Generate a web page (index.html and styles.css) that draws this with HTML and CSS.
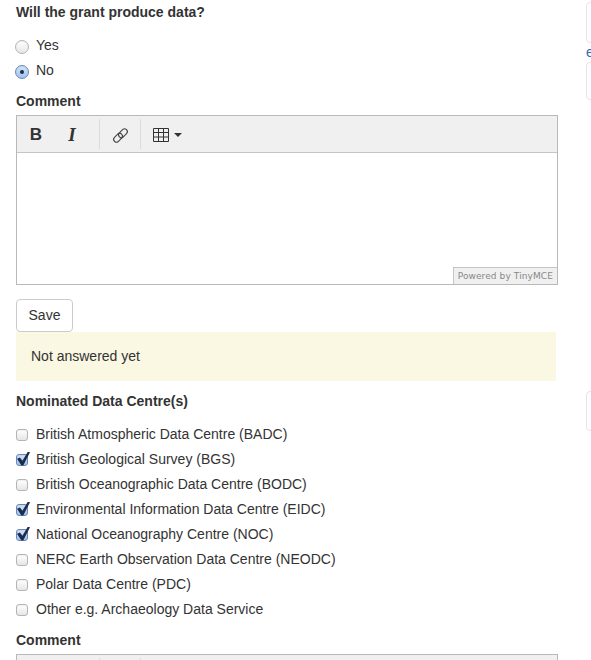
FILE: index.html
```html
<!DOCTYPE html>
<html lang="en">

<head>
    <meta charset="UTF-8">
    <title>Data questions</title>
    <link rel="stylesheet" href="styles.css">
</head>

<body>
    <main class="form">
        <h4 class="question">Will the grant produce data?</h4>
        <div class="radios">
            <label class="option"><input type="radio" name="data"> Yes</label>
            <label class="option"><input type="radio" name="data" checked> No</label>
        </div>

        <h5 class="field-label">Comment</h5>
        <div class="editor">
            <div class="toolbar">
                <div class="tool-group group-format">
                    <span class="tool tool-bold">B</span>
                    <span class="tool tool-italic">I</span>
                </div>
                <div class="tool-group group-link">
                    <span class="tool">
                        <svg width="19" height="19" viewBox="0 0 17 17" fill="none" stroke="#444" stroke-width="1">
                            <rect x="1.8" y="8" width="9" height="5" rx="2.5" transform="rotate(-45 6.3 10.5)" />
                            <rect x="6.2" y="4" width="9" height="5" rx="2.5" transform="rotate(-45 10.7 6.5)" />
                        </svg>
                    </span>
                </div>
                <div class="tool-group group-table">
                    <span class="tool tool-table">
                        <svg width="16" height="14" viewBox="0 0 16 14" fill="none" stroke="#333" stroke-width="1">
                            <path d="M0.5 0.5 H15.5 V13.5 H0.5 Z M0.5 4.5 H15.5 M0.5 9 H15.5 M5.5 0.5 V13.5 M10.5 0.5 V13.5" />
                        </svg>
                        <span class="caret"></span>
                    </span>
                </div>
            </div>
            <div class="edit-area">
                <span class="powered">Powered by TinyMCE</span>
            </div>
        </div>

        <button class="btn" type="button">Save</button>
        <div class="alert">Not answered yet</div>

        <h5 class="centres-label">Nominated Data Centre(s)</h5>
        <div class="checks">
            <label class="option"><input type="checkbox"> British Atmospheric Data Centre (BADC)</label>
            <label class="option"><input type="checkbox" checked> British Geological Survey (BGS)</label>
            <label class="option"><input type="checkbox"> British Oceanographic Data Centre (BODC)</label>
            <label class="option"><input type="checkbox" checked> Environmental Information Data Centre (EIDC)</label>
            <label class="option"><input type="checkbox" checked> National Oceanography Centre (NOC)</label>
            <label class="option"><input type="checkbox"> NERC Earth Observation Data Centre (NEODC)</label>
            <label class="option"><input type="checkbox"> Polar Data Centre (PDC)</label>
            <label class="option"><input type="checkbox"> Other e.g. Archaeology Data Service</label>
        </div>

        <h5 class="field-label second">Comment</h5>
        <div class="editor">
            <div class="toolbar">
                <div class="tool-group group-format"><span class="tool-blank"></span></div>
                <div class="tool-group group-link"><span class="tool-blank"></span></div>
            </div>
        </div>
    </main>

    <aside class="side">
        <div class="side-card first"></div>
        <span class="side-link">e</span>
        <div class="side-card second"></div>
        <div class="side-card third"></div>
    </aside>
</body>

</html>
```

FILE: styles.css
```css
html,
body {
    height: 100%;
    overflow: hidden;
}

body {
    display: flex;
    margin: 0;
    background: #fff;
    color: #333;
    font-family: "Liberation Sans", Arial, sans-serif;
    font-size: 14px;
    line-height: 20px;
}

.form {
    flex: none;
    width: 540px;
    margin-left: 16px;
    padding-top: 2px;
}

.question,
.field-label,
.centres-label {
    margin: 0;
    font-size: 14px;
    font-weight: bold;
    line-height: 20px;
}

.radios {
    margin-top: 10px;
}

.option {
    display: flex;
    align-items: center;
    height: 25px;
    white-space: nowrap;
}

.option input {
    position: relative;
    flex: none;
    appearance: none;
    border: 1px solid #b5b5b5;
    background: linear-gradient(#fff, #e6e6e6);
    box-shadow: inset 0 1px 1px rgba(0, 0, 0, 0.06);
}

.option input[type="radio"] {
    width: 14px;
    height: 14px;
    margin: 4px 7px 0 -1px;
    border-radius: 50%;
}

.option input[type="checkbox"] {
    width: 12px;
    height: 12px;
    margin: 2px 8px 0 0;
    border-radius: 3px;
}

.option input:checked {
    border-color: #6a87b8;
    background: linear-gradient(#d3e4f8, #9cc3ee);
}

.option input[type="radio"]:checked::after {
    content: "";
    position: absolute;
    top: 4px;
    left: 4px;
    width: 4px;
    height: 4px;
    border-radius: 50%;
    background: #1c2b45;
}

.option input[type="checkbox"]:checked::after {
    content: "";
    position: absolute;
    top: -3px;
    left: 0;
    width: 13px;
    height: 14px;
    background: #1d2c4a;
    clip-path: polygon(0 52%, 22% 42%, 42% 66%, 84% 0, 100% 6%, 48% 100%, 34% 100%);
}

.field-label {
    margin-top: 9px;
    margin-bottom: 4px;
}

.field-label.second {
    margin-top: 9px;
}

.editor {
    width: 540px;
    border: 1px solid #b9b9b9;
}

.toolbar {
    display: flex;
    align-items: center;
    height: 36px;
    border-bottom: 1px solid #c5c5c5;
    background: #f0f0f0;
}

.tool-group {
    display: flex;
    align-items: center;
    height: 30px;
    border-right: 1px solid #dcdcdc;
}

.group-format {
    padding: 0 9px 0 1px;
}

.group-link {
    padding: 0 6px;
}

.group-table {
    padding: 0 0 0 12px;
    border-right: 0;
}

.tool {
    display: flex;
    align-items: center;
    justify-content: center;
    box-sizing: border-box;
    height: 30px;
    min-width: 28px;
    padding-top: 2px;
    color: #333;
}

.tool-bold,
.tool-italic {
    width: 36px;
}

.tool-bold {
    font-size: 17px;
    font-weight: bold;
}

.tool-italic {
    font-family: "Liberation Serif", serif;
    font-size: 19px;
    font-style: italic;
    font-weight: bold;
}

.tool-table {
    gap: 5px;
}

.caret {
    width: 0;
    height: 0;
    border-top: 4px solid #333;
    border-left: 4px solid transparent;
    border-right: 4px solid transparent;
}

.tool-blank {
    display: block;
    width: 72px;
    height: 30px;
}

.group-link .tool-blank {
    width: 28px;
}

.edit-area {
    display: flex;
    align-items: flex-end;
    justify-content: flex-end;
    height: 131px;
    background: #fff;
}

.powered {
    padding: 0 4px;
    border-top: 1px solid #c5c5c5;
    border-left: 1px solid #c5c5c5;
    background: #f0f0f0;
    color: #888;
    font-family: "DejaVu Sans", sans-serif;
    font-size: 9px;
    letter-spacing: 0.1px;
    line-height: 16px;
}

.btn {
    display: block;
    width: 57px;
    height: 33px;
    margin-top: 14px;
    padding: 0 0 2px;
    border: 1px solid #ccc;
    border-radius: 4px;
    background: #fff;
    color: #333;
    font: inherit;
}

.alert {
    height: 49px;
    padding-left: 15px;
    background: #faf8e2;
    line-height: 49px;
}

.centres-label {
    margin-top: 10px;
    margin-bottom: 10px;
}

.side {
    flex: none;
    margin-left: 30px;
    padding-top: 2px;
}

.side-card {
    width: 20px;
    border: 1px solid #e4e4e4;
    border-radius: 4px;
}

.side-card.first {
    height: 39px;
}

.side-link {
    display: block;
    height: 19px;
    color: #2a6db5;
    font-size: 14px;
    line-height: 19px;
}

.side-card.second {
    height: 36px;
}

.side-card.third {
    height: 38px;
    margin-top: 291px;
}
```
